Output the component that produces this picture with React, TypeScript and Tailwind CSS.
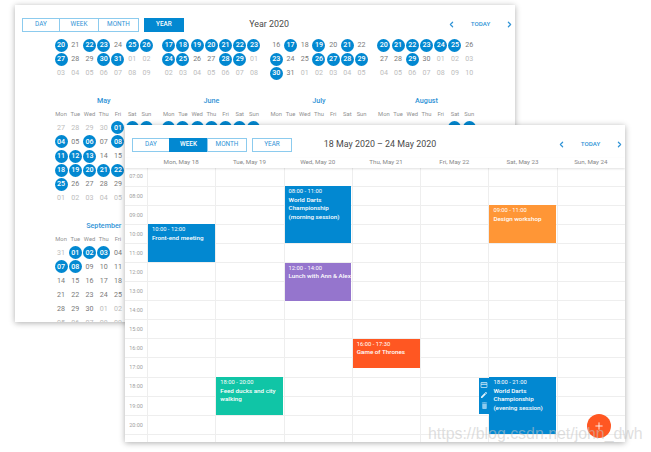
import { ChevronLeft, ChevronRight } from 'lucide-react';

type Day = { d: string; on?: boolean; dim?: boolean };

// shorthand: "*20" is a marked day, "~03" is a day of another month, "_" is a cell hidden by the week card
const parse = (s: string): Day[] =>
  s.split(' ').map((t) =>
    t === '_' ? { d: '' } : t[0] === '*' ? { d: t.slice(1), on: true } : t[0] === '~' ? { d: t.slice(1), dim: true } : { d: t }
  );

const topMonths = [
  '*20 21 *22 *23 24 *25 *26 *27 28 29 *30 *31 ~01 ~02 ~03 ~04 ~05 ~06 ~07 ~08 ~09',
  '*17 *18 *19 *20 *21 *22 *23 *24 *25 26 27 *28 *29 ~01 ~02 ~03 ~04 ~05 ~06 ~07 ~08',
  '16 *17 18 *19 20 *21 22 *23 24 25 *26 *27 *28 *29 *30 31 ~01 ~02 ~03 ~04 ~05',
  '*20 *21 *22 *23 *24 *25 26 27 28 *29 30 ~01 ~02 ~03 ~04 ~05 ~06 ~07 ~08 ~09 ~10',
];

// only the rows that show above the week card
const midMonths = [
  {
    name: 'May',
    days: '~27 ~28 ~29 ~30 *01 *02 *03 *04 05 *06 07 *08 _ _ *11 *12 *13 14 15 _ _ *18 *19 *20 *21 *22 _ _ *25 26 27 28 29 _ _ ~01 ~02 ~03 ~04 ~05 _ _',
  },
  { name: 'June', days: '*01 *02 *03 *04 *05 *06 *07' },
  { name: 'July', days: '~29 ~30 01 02 03 04 05' },
  { name: 'August', days: '~27 ~28 ~29 ~30 ~31 *01 *02' },
];

const september =
  '~31 *01 *02 *03 04 _ _ *07 *08 09 10 11 _ _ 14 15 16 17 18 _ _ 21 22 23 24 25 _ _ 28 29 30 ~01 ~02 _ _ ~05 ~06 ~07 ~08 ~09 _ _';

const weekdays = ['Mon', 'Tue', 'Wed', 'Thu', 'Fri', 'Sat', 'Sun'];

const hours = ['07:00', '08:00', '09:00', '10:00', '11:00', '12:00', '13:00', '14:00', '15:00', '16:00', '17:00', '18:00', '19:00', '20:00', '21:00'];

const ROW = 19.1;

type Ev = { from: number; to: number; time: string; title: string[]; bg: string };

const week: { label: string; events: Ev[] }[] = [
  { label: 'Mon, May 18', events: [{ from: 10, to: 12, time: '10:00 - 12:00', title: ['Front-end meeting'], bg: 'bg-[#0288d1]' }] },
  { label: 'Tue, May 19', events: [{ from: 18, to: 20, time: '18:00 - 20:00', title: ['Feed ducks and city', 'walking'], bg: 'bg-[#10c5a6]' }] },
  {
    label: 'Wed, May 20',
    events: [
      { from: 8, to: 11, time: '08:00 - 11:00', title: ['World Darts', 'Championship', '(morning session)'], bg: 'bg-[#0288d1]' },
      { from: 12, to: 14, time: '12:00 - 14:00', title: ['Lunch with Ann & Alex'], bg: 'bg-[#9575cd]' },
    ],
  },
  { label: 'Thu, May 21', events: [{ from: 16, to: 17.5, time: '16:00 - 17:30', title: ['Game of Thrones'], bg: 'bg-[#ff5722]' }] },
  { label: 'Fri, May 22', events: [] },
  { label: 'Sat, May 23', events: [
    { from: 9, to: 11, time: '09:00 - 11:00', title: ['Design workshop'], bg: 'bg-[#ff9636]' },
    { from: 18, to: 21, time: '18:00 - 21:00', title: ['World Darts', 'Championship', '(evening session)'], bg: 'bg-[#0288d1]' },
  ] },
  { label: 'Sun, May 24', events: [] },
];

function DayCell({ day }: { day: Day }) {
  return (
    <div className="h-[14.1px] flex items-center justify-center">
      {day.on ? (
        <span className="w-[13px] h-[13px] rounded-full bg-[#0288d1] text-white font-medium flex items-center justify-center">{day.d}</span>
      ) : (
        <span className={day.dim ? 'text-[#bdbdbd]' : 'text-[#7a7a7a]'}>{day.d}</span>
      )}
    </div>
  );
}

function DayGrid({ days }: { days: string }) {
  return (
    <div className="grid grid-cols-7 text-[7.1px]">
      {parse(days).map((day, i) => (
        <DayCell key={i} day={day} />
      ))}
    </div>
  );
}

function Month({ name, days }: { name: string; days: string }) {
  return (
    <div className="h-[125px]">
      <div className="h-[14px] flex items-center justify-center text-[7.2px] font-medium text-[#2f93d6]">{name}</div>
      <div className="grid grid-cols-7 h-[12.5px] items-center text-center text-[5.8px] text-[#909090]">
        {weekdays.map((w) => (
          <span key={w}>{w}</span>
        ))}
      </div>
      <DayGrid days={days} />
    </div>
  );
}

function ViewButton({ label, active, className }: { label: string; active?: boolean; className?: string }) {
  return (
    <div
      className={`h-[14px] flex items-center justify-center text-[6.4px] border ${
        active ? 'bg-[#0288d1] border-[#0288d1] text-white font-medium' : 'border-[#8ccbee] text-[#2f93d6]'
      } ${className ?? ''}`}
    >
      {label}
    </div>
  );
}

function Toolbar({ active, title, titleClass }: { active: string; title: string; titleClass: string }) {
  const wide = active === 'YEAR';
  return (
    <div className="flex items-center h-[14px]">
      <ViewButton label="DAY" active={active === 'DAY'} className="w-[38px]" />
      <ViewButton label="WEEK" active={active === 'WEEK'} className={wide ? 'w-[40px] -ml-px' : 'w-[39px] -ml-px'} />
      <ViewButton label="MONTH" active={active === 'MONTH'} className={wide ? 'w-[41px] -ml-px' : 'w-[40px] -ml-px'} />
      <ViewButton label="YEAR" active={active === 'YEAR'} className="w-[40px] ml-[5px]" />
      <div className={`text-[8.9px] text-[#4a4a4a] text-center whitespace-nowrap ${titleClass}`}>{title}</div>
      <div className="flex items-center ml-auto text-[#2f93d6]">
        <ChevronLeft size={9} strokeWidth={3.2} />
        <span className="w-[49px] text-center text-[6.2px] font-medium">TODAY</span>
        <ChevronRight size={9} strokeWidth={3.2} />
      </div>
    </div>
  );
}

function YearCard() {
  return (
    <div className="absolute left-[15px] top-[5px] w-[500px] h-[317px] bg-white overflow-hidden shadow-[0_1px_6px_rgba(0,0,0,0.32)]">
      <div className="pt-[13px] pl-[7px] pr-[1px] h-[33px]">
        <Toolbar active="YEAR" title="Year 2020" titleClass="w-[170px]" />
      </div>
      <div className="pl-[39px] grid grid-cols-[repeat(4,99.5px)] gap-x-[8.1px]">
        {topMonths.map((m, i) => (
          <div key={i} className="h-[56.3px]">
            <DayGrid days={m} />
          </div>
        ))}
        {midMonths.map((m) => (
          <Month key={m.name} name={m.name} days={m.days} />
        ))}
        <Month name="September" days={september} />
      </div>
    </div>
  );
}

function EventBlock({ ev }: { ev: Ev }) {
  return (
    <div
      className={`absolute left-0 right-[0.5px] px-[4px] pt-[2px] text-white ${ev.bg}`}
      style={{ top: (ev.from - 7) * ROW - 0.5, height: (ev.to - ev.from) * ROW }}
    >
      <div className="text-[5.8px] leading-[7.5px]">{ev.time}</div>
      {ev.title.map((line) => (
        <div key={line} className="text-[6.25px] leading-[8.8px] font-medium whitespace-nowrap">
          {line}
        </div>
      ))}
    </div>
  );
}

function EventActions() {
  return (
    <div className="absolute left-[-10px] top-[210.1px] w-[10px] h-[36px] bg-[#0288d1] flex flex-col items-center justify-around py-[2px]">
      <svg width="8" height="8" viewBox="0 0 24 24" fill="#d8edf9">
        <path d="M20 4H4a2 2 0 0 0-2 2v12a2 2 0 0 0 2 2h16a2 2 0 0 0 2-2V6a2 2 0 0 0-2-2zm0 14H4v-7h16v7zm0-10H4V6h16v2z" />
      </svg>
      <svg width="8" height="8" viewBox="0 0 24 24" fill="#e3f2fb">
        <path d="M3 17.25V21h3.75L17.81 9.94l-3.75-3.75L3 17.25zM20.71 7.04a1 1 0 0 0 0-1.41l-2.34-2.34a1 1 0 0 0-1.41 0l-1.83 1.83 3.75 3.75 1.83-1.83z" />
      </svg>
      <svg width="9" height="9" viewBox="0 0 24 24" fill="#8fcbee">
        <path d="M6 19a2 2 0 0 0 2 2h8a2 2 0 0 0 2-2V7H6v12zM19 4h-3.5l-1-1h-5l-1 1H5v2h14V4z" />
      </svg>
    </div>
  );
}

function WeekCard() {
  return (
    <div className="absolute left-[125px] top-[125px] w-[500px] h-[317px] bg-white overflow-hidden shadow-[0_1px_6px_rgba(0,0,0,0.32)]">
      <div className="pt-[13px] pl-[7px] pr-[1px] h-[32.5px]">
        <Toolbar active="WEEK" title="18 May 2020 – 24 May 2020" titleClass="w-[176px]" />
      </div>
      <div className="relative z-10 flex h-[10px] pl-[22px] shadow-[0_1px_2px_rgba(0,0,0,0.12)]">
        {week.map((d) => (
          <div key={d.label} className="flex-1 flex items-center justify-center text-[6.2px] text-[#888888]">
            {d.label}
          </div>
        ))}
      </div>
      <div className="flex">
        <div className="w-[22px] shrink-0">
          {hours.map((h) => (
            <div key={h} className="h-[19.1px] border-b border-[#eeeeee] flex items-center justify-center text-[5.5px] text-[#a0a0a0]">
              {h}
            </div>
          ))}
        </div>
        {week.map((d, i) => (
          <div key={d.label} className="relative flex-1 border-l border-[#eeeeee]">
            {hours.map((h) => (
              <div key={h} className="h-[19.1px] border-b border-[#eeeeee]" />
            ))}
            {d.events.map((ev) => (
              <EventBlock key={ev.time} ev={ev} />
            ))}
            {i === 5 && <EventActions />}
          </div>
        ))}
      </div>
      <div className="absolute left-[462px] top-[289px] w-[24px] h-[24px] rounded-full bg-[#ff5722] flex items-center justify-center text-white">
        <svg width="8" height="8" viewBox="0 0 10 10" stroke="currentColor" strokeWidth="1.1">
          <path d="M5 0.5v9M0.5 5h9" />
        </svg>
      </div>
    </div>
  );
}

export default function App() {
  return (
    <div className="relative w-[651px] h-[452px] bg-white overflow-hidden font-[Roboto,sans-serif]">
      <YearCard />
      <WeekCard />
      <div className="absolute left-[428px] top-[424.5px] text-[15.9px] leading-[18px] font-[Arial,'Liberation_Sans',sans-serif] text-[#c4c4c4]/55 whitespace-nowrap">
        https://blog.csdn.net/john_dwh
      </div>
    </div>
  );
}
